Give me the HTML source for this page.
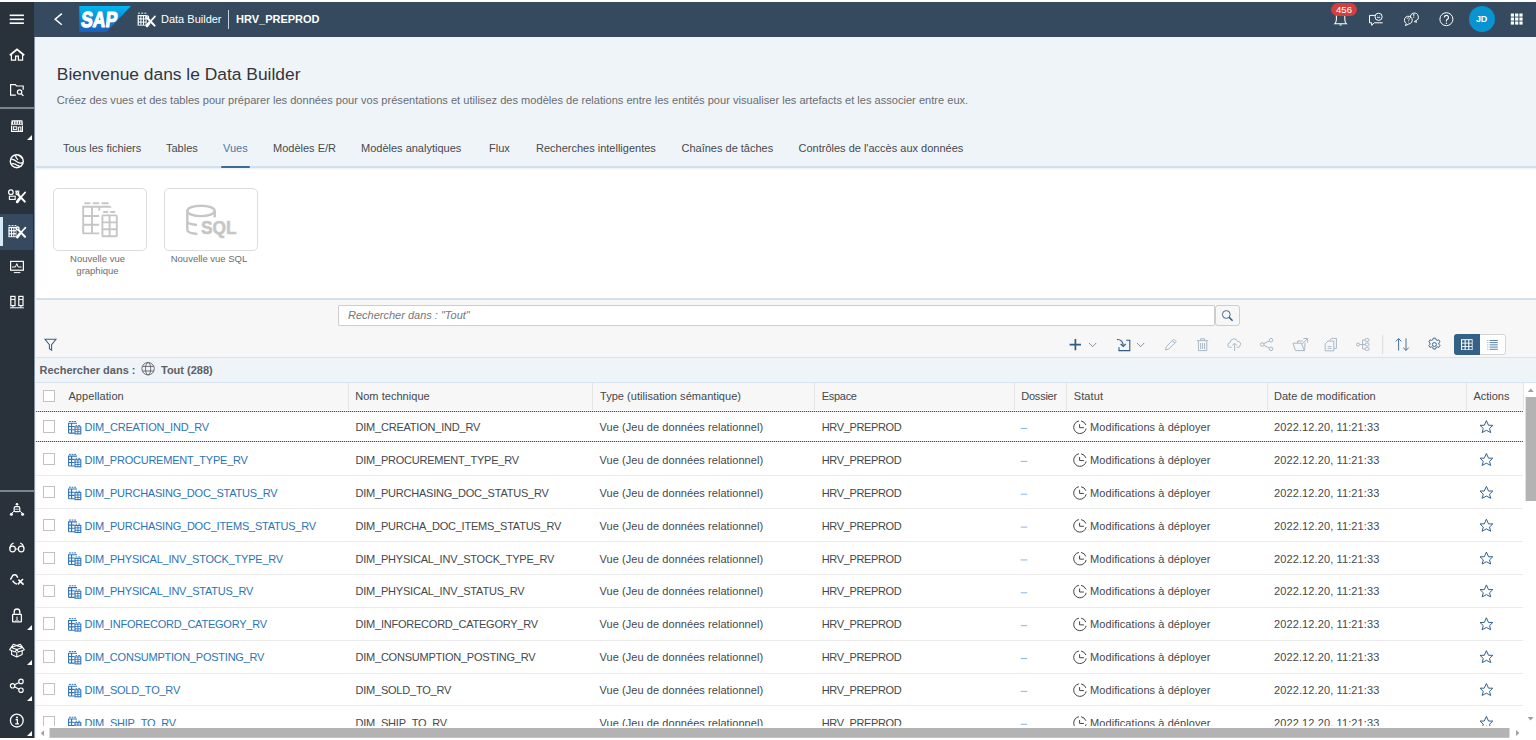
<!DOCTYPE html>
<html><head><meta charset="utf-8"><style>
*{box-sizing:border-box;margin:0;padding:0}
html,body{width:1536px;height:740px;overflow:hidden;background:#fff;font-family:"Liberation Sans",sans-serif;color:#32363a}
.a{position:absolute}
svg{position:absolute;overflow:visible}
.t{position:absolute;white-space:nowrap;line-height:1}
</style></head><body>
<div class="a" style="left:0px;top:0px;width:1536px;height:2px;background:#fdfdfd"></div>
<div class="a" style="left:0px;top:2px;width:1536px;height:35px;background:#354a5f"></div>
<div class="a" style="left:0px;top:2px;width:34px;height:736px;background:#29313a"></div>
<div class="a" style="left:33px;top:37px;width:1px;height:701px;background:#242a31"></div>
<svg style="left:0px;top:0px" width="34" height="37" viewBox="0 0 34 37"><rect x="9.7" y="14.5" width="14.2" height="1.6" fill="#ffffff"/><rect x="9.7" y="18.5" width="14.2" height="1.6" fill="#ffffff"/><rect x="9.7" y="22.4" width="14.2" height="1.6" fill="#ffffff"/></svg>
<svg style="left:40px;top:0px" width="30" height="37" viewBox="0 0 30 37"><polyline points="21.8,13.6 15.2,19.2 21.8,24.8" fill="none" stroke="#fff" stroke-width="1.5"/></svg>
<svg style="left:0px;top:0px" width="140" height="37" viewBox="0 0 140 37"><defs><linearGradient id="sapg" x1="0" y1="0" x2="0" y2="1"><stop offset="0" stop-color="#00b8f1"/><stop offset="0.5" stop-color="#0a8ad8"/><stop offset="1" stop-color="#1e5dbd"/></linearGradient></defs><polygon points="79.3,6.1 131,6.1 106.4,31.9 79.3,31.9" fill="url(#sapg)"/><text x="80.6" y="26.8" font-family="Liberation Sans" font-weight="bold" font-size="21.8" fill="#fff" stroke="#fff" stroke-width="1.2" stroke-linejoin="round" textLength="36" lengthAdjust="spacingAndGlyphs" transform="translate(80.6 26.8) skewX(-6) translate(-80.6 -26.8)">SAP</text></svg>
<svg style="left:0px;top:0px" width="200" height="37" viewBox="0 0 200 37"><g transform="translate(137.6,12.6)"><path d="M0.4 0.6h2M3.6 0.6h2M6.8 0.6h2" stroke="#fff" stroke-width="0.9"/><rect x="0" y="2.4" width="9" height="10.6" fill="#fff"/><rect x="1.2" y="3.6" width="1.6" height="2.2" fill="#354a5f"/><rect x="3.8" y="3.6" width="1.6" height="2.2" fill="#354a5f"/><rect x="6.4" y="3.6" width="1.6" height="2.2" fill="#354a5f"/><rect x="1.2" y="6.8" width="1.6" height="2.2" fill="#354a5f"/><rect x="3.8" y="6.8" width="1.6" height="2.2" fill="#354a5f"/><rect x="6.4" y="6.8" width="1.6" height="2.2" fill="#354a5f"/><rect x="1.2" y="10.0" width="1.6" height="2.2" fill="#354a5f"/><rect x="3.8" y="10.0" width="1.6" height="2.2" fill="#354a5f"/><rect x="6.4" y="10.0" width="1.6" height="2.2" fill="#354a5f"/><g transform="translate(8.2,2.4)" fill="none" stroke="#fff" stroke-linecap="round"><path d="M1.8 3.2L8.8 10.6" stroke-width="2.1"/><circle cx="1.4" cy="2.2" r="1.4" stroke-width="1.3"/><path d="M9.2 1.4L3.6 7.6" stroke-width="1.6"/><path d="M3.4 7.8L1.2 10.8" stroke-width="2.8"/></g></g></svg>
<div class="t" style="left:161px;top:13.99px;font-size:11px;color:#fff">Data Builder</div>
<div class="a" style="left:228px;top:10px;width:1px;height:19px;background:#c9d1d9"></div>
<div class="t" style="left:236px;top:13.99px;font-size:11px;color:#fff;font-weight:bold">HRV_PREPROD</div>
<svg style="left:1320px;top:0px" width="40" height="37" viewBox="0 0 40 37"><path d="M16.4 15v4.6c0 1.8-0.4 3-1.6 4.2h11.6c-1.2-1.2-1.6-2.4-1.6-4.2V15" fill="none" stroke="#fff" stroke-width="1.05"/><path d="M19.2 24.4c0.3 0.9 0.7 1.2 1.4 1.2s1.1-0.3 1.4-1.2z" fill="#fff"/></svg>
<div class="a" style="left:1331px;top:3px;width:26px;height:13px;background:#d33f3f;border-radius:7px"></div>
<div class="t" style="left:1331px;top:4.77px;font-size:9.6px;width:26px;text-align:center;color:#fff">456</div>
<svg style="left:1360px;top:0px" width="30" height="37" viewBox="0 0 30 37"><path d="M14.9 15.4H9.5v7.4h2.2v2.6l2.6-2.6h8.4" fill="none" stroke="#fff" stroke-width="1"/><circle cx="18.6" cy="16.8" r="3.6" fill="none" stroke="#fff" stroke-width="1"/><path d="M17 17.6h3.2M17.4 16h0.6M19.2 16h0.6" stroke="#fff" stroke-width="0.8"/></svg>
<svg style="left:1400px;top:0px" width="24" height="37" viewBox="0 0 24 37"><path d="M6.2 23.4a3.9 3.9 0 1 1 2.6 0.6l-3.4 1.6z" fill="none" stroke="#fff" stroke-width="1"/><path d="M10.6 17.8a3.9 3.9 0 1 1 4.8 3l1.4 1.4-2.8-0.6" fill="none" stroke="#fff" stroke-width="1"/><path d="M7.2 18.9a1.1 1.1 0 1 1 1.5 1v0.9" fill="none" stroke="#fff" stroke-width="0.8"/><circle cx="8.7" cy="22" r="0.45" fill="#fff"/><path d="M13.8 13.8v2.6" stroke="#fff" stroke-width="1"/><circle cx="13.8" cy="17.6" r="0.5" fill="#fff"/></svg>
<svg style="left:1430px;top:0px" width="30" height="37" viewBox="0 0 30 37"><circle cx="16.4" cy="19.2" r="6.5" fill="none" stroke="#fff" stroke-width="1"/><path d="M14.3 17.4a2.1 2.1 0 1 1 2.9 2c-0.6 0.3-0.8 0.7-0.8 1.4v0.6" fill="none" stroke="#fff" stroke-width="1.1"/><circle cx="16.4" cy="23.3" r="0.7" fill="#fff"/></svg>
<div class="a" style="left:1468.5px;top:6px;width:26px;height:26px;background:#0893d1;border-radius:50%"></div>
<div class="t" style="left:1468.5px;top:14.78px;font-size:9px;width:26px;text-align:center;color:#fff;font-weight:bold;letter-spacing:-0.2px">JD</div>
<svg style="left:0px;top:0px" width="1536" height="37" viewBox="0 0 1536 37"><rect x="1510.8" y="13.5" width="3.2" height="3.1" fill="#fff"/><rect x="1515.1" y="13.5" width="3.2" height="3.1" fill="#fff"/><rect x="1519.4" y="13.5" width="3.2" height="3.1" fill="#fff"/><rect x="1510.8" y="17.5" width="3.2" height="3.1" fill="#fff"/><rect x="1515.1" y="17.5" width="3.2" height="3.1" fill="#fff"/><rect x="1519.4" y="17.5" width="3.2" height="3.1" fill="#fff"/><rect x="1510.8" y="21.5" width="3.2" height="3.1" fill="#fff"/><rect x="1515.1" y="21.5" width="3.2" height="3.1" fill="#fff"/><rect x="1519.4" y="21.5" width="3.2" height="3.1" fill="#fff"/></svg>
<div class="a" style="left:0px;top:107px;width:34px;height:2px;background:#7c838a"></div>
<div class="a" style="left:0px;top:490px;width:34px;height:2px;background:#7c838a"></div>
<div class="a" style="left:0px;top:214px;width:33px;height:36px;background:#354a5f"></div>
<div class="a" style="left:0px;top:217px;width:3px;height:29px;background:#d8e9f8"></div>
<svg style="left:0px;top:0px" width="34" height="740" viewBox="0 0 34 740"><path d="M9.8 55.2l7.2-5.8 7.2 5.8" fill="none" stroke="#ffffff" stroke-width="1.8"/><path d="M11.4 54.6v5.6h4.2v-4h2.8v4h4.2v-5.6" fill="none" stroke="#ffffff" stroke-width="1.2"/><path d="M15.8 95.2H10.6V84.6h4.6l1.4 1.4h6.6v3.8" fill="none" stroke="#ffffff" stroke-width="1.2"/><circle cx="19.6" cy="92" r="2.2" fill="none" stroke="#ffffff" stroke-width="1.2"/><path d="M21.2 93.7l2.2 2.2" stroke="#ffffff" stroke-width="1.3"/><path d="M11.6 120.2h10.8l0.6 4.6H11z" fill="#ffffff"/><path d="M13.6 121.4v2.6M16 121.4v2.6M18.4 121.4v2.6M20.8 121.4v2.6" stroke="#29313a" stroke-width="0.9"/><path d="M11.6 125.6v5.8h10.8v-5.8" fill="none" stroke="#ffffff" stroke-width="1.2"/><rect x="13.4" y="126.8" width="3.4" height="2.6" fill="none" stroke="#ffffff" stroke-width="1"/><path d="M18.6 131.2v-4.2h2.2v4.2" fill="none" stroke="#ffffff" stroke-width="1"/><circle cx="16.8" cy="161.2" r="6.5" fill="none" stroke="#ffffff" stroke-width="1.4"/><path d="M11.2 159.2c2.4 0.2 4.4 1.4 6.2 2.8 1.8 1.2 3.8 1.4 5.6 0.6M11.8 163.8c2.2-0.6 4 0.4 5.6 1.6 1.4 1 2.8 1.2 4 0.6M15.4 155.4c0.4 2 1.2 3.4 2.6 4.4M18.4 155.2c1.8 0.8 3 2 3.6 3.4" fill="none" stroke="#ffffff" stroke-width="1.3"/><circle cx="10.9" cy="192.2" r="2.3" fill="none" stroke="#ffffff" stroke-width="1.2"/><rect x="9.4" y="196.2" width="5.8" height="3.2" fill="none" stroke="#ffffff" stroke-width="1.1"/><path d="M15.2 191.2h4.2" stroke="#ffffff" stroke-width="1.2"/><g transform="translate(16,191)" fill="none" stroke="#fff" stroke-linecap="round"><path d="M1.8 3.2L8.8 10.6" stroke-width="2.1"/><circle cx="1.4" cy="2.2" r="1.4" stroke-width="1.3"/><path d="M9.2 1.4L3.6 7.6" stroke-width="1.6"/><path d="M3.4 7.8L1.2 10.8" stroke-width="2.8"/></g><path d="M8.6 225.5h1.8M11.6 225.5h1.8M14.6 225.5h1.8" stroke="#ffffff" stroke-width="0.9"/><rect x="8.4" y="226.8" width="8" height="10.4" fill="#ffffff"/><rect x="9.6" y="228.2" width="1.4" height="1.9" fill="#354a5f"/><rect x="12.0" y="228.2" width="1.4" height="1.9" fill="#354a5f"/><rect x="14.4" y="228.2" width="1.4" height="1.9" fill="#354a5f"/><rect x="9.6" y="231.3" width="1.4" height="1.9" fill="#354a5f"/><rect x="12.0" y="231.3" width="1.4" height="1.9" fill="#354a5f"/><rect x="14.4" y="231.3" width="1.4" height="1.9" fill="#354a5f"/><rect x="9.6" y="234.4" width="1.4" height="1.9" fill="#354a5f"/><rect x="12.0" y="234.4" width="1.4" height="1.9" fill="#354a5f"/><rect x="14.4" y="234.4" width="1.4" height="1.9" fill="#354a5f"/><g transform="translate(16.2,226.2)" fill="none" stroke="#fff" stroke-linecap="round"><path d="M1.8 3.2L8.8 10.6" stroke-width="2.1"/><circle cx="1.4" cy="2.2" r="1.4" stroke-width="1.3"/><path d="M9.2 1.4L3.6 7.6" stroke-width="1.6"/><path d="M3.4 7.8L1.2 10.8" stroke-width="2.8"/></g><rect x="10.6" y="261.4" width="12.8" height="8.8" fill="none" stroke="#ffffff" stroke-width="1.2"/><path d="M12 267h3.4l1.4-3.4 1.4 3.4h3.4M13.8 272.6h6.6" fill="none" stroke="#ffffff" stroke-width="1"/><rect x="10.8" y="296.4" width="4.2" height="9.2" fill="none" stroke="#ffffff" stroke-width="1.2"/><rect x="18.8" y="296.4" width="4.2" height="9.2" fill="none" stroke="#ffffff" stroke-width="1.2"/><path d="M10.8 299.4h4.2M18.8 299.4h4.2M12.9 305.6v2.2M20.9 305.6v2.2M10 307.8h13.8" fill="none" stroke="#ffffff" stroke-width="1"/><g transform="translate(0,0.7)"><circle cx="17" cy="503.6" r="1.3" fill="#ffffff"/><rect x="14.2" y="506" width="5.6" height="5" rx="1.2" fill="none" stroke="#ffffff" stroke-width="1.2"/><path d="M15.2 508.5h3.6" stroke="#ffffff" stroke-width="0.8"/><path d="M14.2 510.4l-2.6 2.2M19.8 510.4l2.6 2.2" stroke="#ffffff" stroke-width="1"/><circle cx="11.4" cy="513.6" r="1.5" fill="#ffffff"/><circle cx="22.6" cy="513.6" r="1.5" fill="#ffffff"/></g><circle cx="12.6" cy="549" r="2.8" fill="none" stroke="#ffffff" stroke-width="1.2"/><circle cx="21.2" cy="549" r="2.8" fill="none" stroke="#ffffff" stroke-width="1.2"/><path d="M9.8 548.4c0.6-3 2-4.8 3.8-5.2M24 548.4c-0.6-3-2-4.8-3.8-5.2M15.4 549h3" fill="none" stroke="#ffffff" stroke-width="1.2"/><path d="M10.4 579.6L12.8 575.4C13.8 574.4 15.6 574.4 16.6 575.6L17.8 577.6M12.6 580.6C13.6 582.6 15 583.6 16.8 584.2" fill="none" stroke="#ffffff" stroke-width="1.5"/><path d="M17.8 584.4L23 579M18.4 579.6L23.6 584.6" fill="none" stroke="#ffffff" stroke-width="1.6"/><rect x="12.6" y="614.4" width="8.8" height="7.4" rx="0.6" fill="none" stroke="#ffffff" stroke-width="1.3"/><path d="M14.2 614.4v-2.6a2.8 2.8 0 0 1 5.6 0v2.6" fill="none" stroke="#ffffff" stroke-width="1.3"/><path d="M17 616.6v2.6M15.2 621.4l1.8-2 1.8 2" fill="none" stroke="#ffffff" stroke-width="1"/><path d="M11.2 647.4L16.8 645.6L22.6 647.4L16.8 649.4Z M11.2 647.4L9.6 649.8L15.2 652L16.8 649.4L18.4 652L24.4 649.8L22.6 647.4 M11.2 647.4L13.4 644.2L16.8 645.6L20.2 644.2L22.6 647.4 M11.6 650.6V654.6L16.8 657L22.2 654.6V650.6 M16.8 652V657" fill="none" stroke="#ffffff" stroke-width="1.1" stroke-linejoin="round"/><circle cx="12.6" cy="685.8" r="2.2" fill="none" stroke="#ffffff" stroke-width="1.2"/><circle cx="21" cy="681.4" r="2.2" fill="none" stroke="#ffffff" stroke-width="1.2"/><circle cx="21" cy="690.2" r="2.2" fill="none" stroke="#ffffff" stroke-width="1.2"/><path d="M14.6 684.8l4.4-2.4M14.6 686.8l4.4 2.4" stroke="#ffffff" stroke-width="1.1"/><circle cx="16.8" cy="720.6" r="6.4" fill="none" stroke="#ffffff" stroke-width="1.3"/><circle cx="17" cy="717.6" r="1" fill="#ffffff"/><path d="M15.6 719.6h1.8v4.2M15.2 723.8h3.8" fill="none" stroke="#ffffff" stroke-width="1.3"/></svg>
<svg style="left:27.3px;top:135px" width="5" height="5" viewBox="0 0 5 5"><polygon points="5,0 5,5 0,5" fill="#fff"/></svg>
<svg style="left:27.3px;top:624.5px" width="5" height="5" viewBox="0 0 5 5"><polygon points="5,0 5,5 0,5" fill="#fff"/></svg>
<svg style="left:27.3px;top:660px" width="5" height="5" viewBox="0 0 5 5"><polygon points="5,0 5,5 0,5" fill="#fff"/></svg>
<svg style="left:27.3px;top:695.5px" width="5" height="5" viewBox="0 0 5 5"><polygon points="5,0 5,5 0,5" fill="#fff"/></svg>
<svg style="left:27.3px;top:730.5px" width="5" height="5" viewBox="0 0 5 5"><polygon points="5,0 5,5 0,5" fill="#fff"/></svg>
<div class="a" style="left:35px;top:37px;width:1501px;height:130px;background:#eff4f9"></div>
<div class="a" style="left:35px;top:166px;width:1501px;height:2px;background:#d2dfec"></div>
<div class="a" style="left:35px;top:168px;width:1501px;height:2px;background:linear-gradient(#e9f0f6,#fbfcfd)"></div>
<div class="t" style="left:56.8px;top:65.57px;font-size:17.4px;color:#32363a">Bienvenue dans le Data Builder</div>
<div class="t" style="left:56.8px;top:94.92px;font-size:11.08px;color:#6a6d70">Créez des vues et des tables pour préparer les données pour vos présentations et utilisez des modèles de relations entre les entités pour visualiser les artefacts et les associer entre eux.</div>
<div class="t" style="left:63px;top:143.09px;font-size:11px;color:#46494d">Tous les fichiers</div>
<div class="t" style="left:166px;top:143.09px;font-size:11px;color:#46494d">Tables</div>
<div class="t" style="left:223px;top:143.09px;font-size:11px;color:#4a78a3">Vues</div>
<div class="t" style="left:273px;top:143.09px;font-size:11px;color:#46494d">Modèles E/R</div>
<div class="t" style="left:361px;top:143.09px;font-size:11px;color:#46494d">Modèles analytiques</div>
<div class="t" style="left:489px;top:143.09px;font-size:11px;color:#46494d">Flux</div>
<div class="t" style="left:536px;top:143.09px;font-size:11px;color:#46494d">Recherches intelligentes</div>
<div class="t" style="left:681.5px;top:143.09px;font-size:11px;color:#46494d">Chaînes de tâches</div>
<div class="t" style="left:798.5px;top:143.09px;font-size:11px;color:#46494d">Contrôles de l'accès aux données</div>
<div class="a" style="left:221px;top:166px;width:29px;height:2px;background:#3d6a95;border-radius:1px"></div>
<div class="a" style="left:35px;top:170px;width:1501px;height:129px;background:#fff"></div>
<div class="a" style="left:35px;top:298px;width:1501px;height:2px;background:#d4e0ec"></div>
<div class="a" style="left:53px;top:188px;width:94px;height:63px;border:1px solid #dcdcdc;border-radius:5px;background:#fff"></div>
<div class="a" style="left:164px;top:188px;width:94px;height:63px;border:1px solid #dcdcdc;border-radius:5px;background:#fff"></div>
<svg style="left:0px;top:0px" width="300" height="260" viewBox="0 0 300 260"><g fill="none" stroke="#c6c6c6" stroke-width="1.9"><path d="M84.4 203.2h6M92.8 203.2h6.4M101.6 203.2h7"/><path d="M83.2 234V206.8h26.2c0.6 0 1 0.4 1 1M83.2 216h16M83.2 224.8h16M83.2 233.4h16M92 206.8v26.6"/><path d="M99.2 207v3.6"/><path d="M103.2 212h5M110.2 212h5"/><rect x="102.4" y="215.4" width="14.4" height="20.8" rx="0.6"/><path d="M102.4 222.4h14.4M102.4 229.2h14.4M109.6 215.4v20.8"/></g></svg>
<svg style="left:0px;top:0px" width="300" height="260" viewBox="0 0 300 260"><g fill="none" stroke="#c6c6c6" stroke-width="2.4"><ellipse cx="201" cy="210.9" rx="13.7" ry="5.2"/><path d="M187.3 211v18.6c0 2.6 3.6 4 10 4.4"/><path d="M187.3 221.6c0 1.8 4 3 9.6 3.4"/><path d="M214.7 211v6.4"/></g><text x="201" y="233.8" font-family="Liberation Sans" font-weight="bold" font-size="19" fill="#c6c6c6" stroke="#c6c6c6" stroke-width="0.5" textLength="35.6" lengthAdjust="spacingAndGlyphs">SQL</text></svg>
<div class="t" style="left:53px;top:254.06px;font-size:9.5px;width:89px;text-align:center;color:#6a6d70">Nouvelle vue</div>
<div class="t" style="left:53px;top:265.56px;font-size:9.5px;width:89px;text-align:center;color:#6a6d70">graphique</div>
<div class="t" style="left:164px;top:254.06px;font-size:9.5px;width:90px;text-align:center;color:#6a6d70">Nouvelle vue SQL</div>
<div class="a" style="left:35px;top:300px;width:1501px;height:57px;background:#f7f7f7"></div>
<div class="a" style="left:35px;top:356.5px;width:1501px;height:1.5px;background:#e0e0e0"></div>
<div class="a" style="left:338px;top:305.4px;width:876.5px;height:20.6px;background:#fff;border:1.2px solid #cdcdcd;border-radius:1px"></div>
<div class="t" style="left:348px;top:310.29px;font-size:11px;color:#74777a;font-style:italic">Rechercher dans : "Tout"</div>
<div class="a" style="left:1215px;top:305.4px;width:25px;height:20.6px;background:#f7f7f7;border:1.3px solid #cdcdcd;border-radius:3px"></div>
<svg style="left:1214px;top:305px" width="26" height="21" viewBox="0 0 26 21"><circle cx="12.3" cy="9.5" r="3.9" fill="none" stroke="#3d6893" stroke-width="1"/><path d="M15.2 12.4l3.4 3.4" stroke="#2f5d8a" stroke-width="1.5"/></svg>
<svg style="left:35px;top:330px" width="30" height="28" viewBox="0 0 30 28"><path d="M10 9.2h11l-4.4 5.6v5.4l-2.2-1.4v-4z" fill="none" stroke="#346187" stroke-width="1.05"/></svg>
<svg style="left:0px;top:0px" width="1536" height="360" viewBox="0 0 1536 360"><path d="M1069.6 344.7h11.4M1075.4 339v11.3" stroke="#315b87" stroke-width="1.7"/><polyline points="1089,343 1092.6,346.6 1096.2,343" fill="none" stroke="#7a7f95" stroke-width="0.9"/><polyline points="1137,343 1140.6,346.6 1144.2,343" fill="none" stroke="#7a7f95" stroke-width="0.9"/><path d="M1119 347.2V350.6H1129.8V340.2H1126.2" fill="none" stroke="#315b87" stroke-width="1.1"/><path d="M1117 339.5C1120.6 339.4 1123 341.2 1123.2 345.8" fill="none" stroke="#315b87" stroke-width="1.1"/><polyline points="1120.6,344 1123.2,346.5 1125.8,344" fill="none" stroke="#315b87" stroke-width="1.2"/><path d="M1165.4 350l1-3.4 7.4-7.4 2.4 2.4-7.4 7.4zM1172.4 340.6l2.4 2.4" fill="none" stroke="#a9b8c6" stroke-width="1"/><path d="M1197 340.6h11.2M1200.6 340.6v-1.8h4v1.8M1198.4 341v9.6h8.4v-9.6M1200.6 343v6M1202.6 343v6M1204.6 343v6" fill="none" stroke="#a9b8c6" stroke-width="1"/><path d="M1231.6 347.4h-1.4a2.4 2.4 0 0 1 0-4.8 3.8 3.8 0 0 1 7.4-1.2 2.6 2.6 0 0 1 2.4 4.2 2 2 0 0 1-1.6 1.8h-1.6M1234.6 351v-7.6M1232.2 345.6l2.4-2.4 2.4 2.4" fill="none" stroke="#a9b8c6" stroke-width="1"/><circle cx="1262.2" cy="344.5" r="1.8" fill="none" stroke="#a9b8c6" stroke-width="1"/><circle cx="1271" cy="340.2" r="1.8" fill="none" stroke="#a9b8c6" stroke-width="1"/><circle cx="1271" cy="348.8" r="1.8" fill="none" stroke="#a9b8c6" stroke-width="1"/><path d="M1263.8 343.6l5.6-2.6M1263.8 345.4l5.6 2.6" stroke="#a9b8c6" stroke-width="1"/><path d="M1293 343.2H1301.4L1304.4 350.6H1295.4Z" fill="none" stroke="#a9b8c6" stroke-width="1" stroke-linejoin="round"/><path d="M1297.6 343V341H1302.6M1305.1 342.6L1304.6 350.4" fill="none" stroke="#a9b8c6" stroke-width="1"/><path d="M1302.2 344L1307.4 338.7M1303.4 338.5H1307.6V342.6" fill="none" stroke="#a9b8c6" stroke-width="1"/><path d="M1325.2 343.8L1328 341H1333.8V350.8H1325.2Z" fill="none" stroke="#a9b8c6" stroke-width="1" stroke-linejoin="round"/><path d="M1329.4 340.8L1331.4 338.4H1336.4V348.4H1334" fill="none" stroke="#a9b8c6" stroke-width="1"/><path d="M1327.6 346.6H1331.6M1327.6 348.4H1331.6" stroke="#a9b8c6" stroke-width="0.9"/><circle cx="1358" cy="344.5" r="1.5" fill="none" stroke="#a9b8c6" stroke-width="1"/><rect x="1365.2" y="338.6" width="3.8" height="2.8" rx="1" fill="none" stroke="#a9b8c6" stroke-width="1"/><rect x="1365.2" y="343.1" width="3.8" height="2.8" rx="1" fill="none" stroke="#a9b8c6" stroke-width="1"/><rect x="1365.2" y="347.6" width="3.8" height="2.8" rx="1" fill="none" stroke="#a9b8c6" stroke-width="1"/><path d="M1359.6 344.5h5.6M1362.6 340v9M1362.6 340h2.6M1362.6 349h2.6" fill="none" stroke="#a9b8c6" stroke-width="1"/><rect x="1382.2" y="335.2" width="1" height="19" fill="#d9d9d9"/><path d="M1398.6 350.6v-12M1395.8 341.4l2.8-2.8 2.8 2.8M1406 338.4v12M1403.2 347.6l2.8 2.8 2.8-2.8" fill="none" stroke="#45709b" stroke-width="1"/><circle cx="1434.4" cy="344.5" r="2" fill="none" stroke="#3d6893" stroke-width="1"/><path d="M1433.2 338.2h2.4l0.4 1.6 1.2 0.6 1.6-0.6 1.2 2-1.2 1.2v1.2l1.2 1.2-1.2 2-1.6-0.6-1.2 0.6-0.4 1.6h-2.4l-0.4-1.6-1.2-0.6-1.6 0.6-1.2-2 1.2-1.2v-1.2l-1.2-1.2 1.2-2 1.6 0.6 1.2-0.6z" fill="none" stroke="#3d6893" stroke-width="1"/></svg>
<div class="a" style="left:1453.5px;top:334.2px;width:52px;height:20.6px;border:1px solid #d5d5d5;border-radius:3px;background:#fff"></div>
<div class="a" style="left:1453.5px;top:334.2px;width:26.5px;height:20.6px;background:#346187;border-radius:3px 0 0 3px"></div>
<svg style="left:0px;top:0px" width="1536" height="360" viewBox="0 0 1536 360"><rect x="1461" y="339.2" width="11.6" height="10.8" fill="#fff"/><rect x="1462.10" y="340.20" width="2.5" height="2.5" fill="#346187"/><rect x="1465.70" y="340.20" width="2.5" height="2.5" fill="#346187"/><rect x="1469.30" y="340.20" width="2.5" height="2.5" fill="#346187"/><rect x="1462.10" y="343.55" width="2.5" height="2.5" fill="#346187"/><rect x="1465.70" y="343.55" width="2.5" height="2.5" fill="#346187"/><rect x="1469.30" y="343.55" width="2.5" height="2.5" fill="#346187"/><rect x="1462.10" y="346.90" width="2.5" height="2.5" fill="#346187"/><rect x="1465.70" y="346.90" width="2.5" height="2.5" fill="#346187"/><rect x="1469.30" y="346.90" width="2.5" height="2.5" fill="#346187"/></svg>
<svg style="left:0px;top:0px" width="1536" height="360" viewBox="0 0 1536 360"><rect x="1487.4" y="340.0" width="0.9" height="0.9" fill="#6a8aa6"/><rect x="1489.6" y="340.0" width="8.2" height="0.9" fill="#4f7394"/><rect x="1487.4" y="342.2" width="0.9" height="0.9" fill="#6a8aa6"/><rect x="1489.6" y="342.2" width="8.2" height="0.9" fill="#4f7394"/><rect x="1487.4" y="344.4" width="0.9" height="0.9" fill="#6a8aa6"/><rect x="1489.6" y="344.4" width="8.2" height="0.9" fill="#4f7394"/><rect x="1487.4" y="346.6" width="0.9" height="0.9" fill="#6a8aa6"/><rect x="1489.6" y="346.6" width="8.2" height="0.9" fill="#4f7394"/><rect x="1487.4" y="348.8" width="0.9" height="0.9" fill="#6a8aa6"/><rect x="1489.6" y="348.8" width="8.2" height="0.9" fill="#4f7394"/></svg>
<div class="a" style="left:35px;top:358px;width:1501px;height:24.5px;background:#eff4f9"></div>
<div class="a" style="left:35px;top:382px;width:1501px;height:1px;background:#d9e3ed"></div>
<div class="t" style="left:39.5px;top:365.09px;font-size:11px;color:#5d6165;font-weight:bold">Rechercher dans :</div>
<svg style="left:0px;top:0px" width="300" height="400" viewBox="0 0 300 400"><g fill="none" stroke="#5d6165" stroke-width="0.9"><circle cx="148.1" cy="368.7" r="6.2"/><ellipse cx="148.1" cy="368.7" rx="2.6" ry="6.2"/><path d="M142.4 366.4h11.4M142.4 371h11.4"/></g></svg>
<div class="t" style="left:161px;top:365.09px;font-size:11px;color:#5d6165;font-weight:bold">Tout (288)</div>
<div class="a" style="left:35px;top:383px;width:1488px;height:27px;background:#f7f7f7"></div>
<div class="a" style="left:348px;top:383px;width:1px;height:27px;background:#e5e5e5"></div>
<div class="a" style="left:592px;top:383px;width:1px;height:27px;background:#e5e5e5"></div>
<div class="a" style="left:814px;top:383px;width:1px;height:27px;background:#e5e5e5"></div>
<div class="a" style="left:1014px;top:383px;width:1px;height:27px;background:#e5e5e5"></div>
<div class="a" style="left:1066px;top:383px;width:1px;height:27px;background:#e5e5e5"></div>
<div class="a" style="left:1267px;top:383px;width:1px;height:27px;background:#e5e5e5"></div>
<div class="a" style="left:1466px;top:383px;width:1px;height:27px;background:#e5e5e5"></div>
<div class="a" style="left:42.6px;top:389.8px;width:12.4px;height:12.4px;border:1.7px solid #c2c2c2;background:#fff"></div>
<div class="t" style="left:68.4px;top:390.69px;font-size:11px;color:#44484c;letter-spacing:0.090px">Appellation</div>
<div class="t" style="left:355.2px;top:390.69px;font-size:11px;color:#44484c;letter-spacing:0.041px">Nom technique</div>
<div class="t" style="left:600px;top:390.69px;font-size:11px;color:#44484c;letter-spacing:0.035px">Type (utilisation sémantique)</div>
<div class="t" style="left:821.7px;top:390.69px;font-size:11px;color:#44484c;letter-spacing:-0.278px">Espace</div>
<div class="t" style="left:1021.3px;top:390.69px;font-size:11px;color:#44484c;letter-spacing:-0.242px">Dossier</div>
<div class="t" style="left:1073.8px;top:390.69px;font-size:11px;color:#44484c;letter-spacing:0.087px">Statut</div>
<div class="t" style="left:1273.9px;top:390.69px;font-size:11px;color:#44484c;letter-spacing:0.082px">Date de modification</div>
<div class="t" style="left:1473.5px;top:390.69px;font-size:11px;color:#44484c;letter-spacing:-0.023px">Actions</div>
<div class="a" style="left:0;top:410px;width:1523px;height:316px;overflow:hidden">
<div class="a" style="left:35px;top:0;width:1488px;height:316px;background:#fff"></div>
<div class="a" style="left:42.6px;top:10.199999999999989px;width:12.4px;height:12.4px;border:1.7px solid #c2c2c2;background:#fff"></div>
<div class="t" style="left:84.5px;top:12.09px;font-size:11px;color:#2d73b8;letter-spacing:-0.215px">DIM_CREATION_IND_RV</div>
<div class="t" style="left:355.5px;top:12.09px;font-size:11px;color:#44484c;letter-spacing:-0.209px">DIM_CREATION_IND_RV</div>
<div class="t" style="left:599.6px;top:12.09px;font-size:11px;color:#44484c;letter-spacing:0.060px">Vue (Jeu de données relationnel)</div>
<div class="t" style="left:821.7px;top:12.09px;font-size:11px;color:#44484c;letter-spacing:-0.345px">HRV_PREPROD</div>
<div class="t" style="left:1090px;top:12.09px;font-size:11px;color:#44484c;letter-spacing:0.076px">Modifications à déployer</div>
<div class="t" style="left:1274px;top:12.09px;font-size:11px;color:#44484c;letter-spacing:0.113px">2022.12.20, 11:21:33</div>
<div class="a" style="left:35px;top:65px;width:1488px;height:1px;background:#ebebeb"></div>
<div class="a" style="left:42.6px;top:43.10000000000002px;width:12.4px;height:12.4px;border:1.7px solid #c2c2c2;background:#fff"></div>
<div class="t" style="left:84.5px;top:44.95px;font-size:11px;color:#2d73b8;letter-spacing:-0.233px">DIM_PROCUREMENT_TYPE_RV</div>
<div class="t" style="left:355.5px;top:44.95px;font-size:11px;color:#44484c;letter-spacing:-0.226px">DIM_PROCUREMENT_TYPE_RV</div>
<div class="t" style="left:599.6px;top:44.95px;font-size:11px;color:#44484c;letter-spacing:0.060px">Vue (Jeu de données relationnel)</div>
<div class="t" style="left:821.7px;top:44.95px;font-size:11px;color:#44484c;letter-spacing:-0.345px">HRV_PREPROD</div>
<div class="t" style="left:1090px;top:44.95px;font-size:11px;color:#44484c;letter-spacing:0.076px">Modifications à déployer</div>
<div class="t" style="left:1274px;top:44.95px;font-size:11px;color:#44484c;letter-spacing:0.113px">2022.12.20, 11:21:33</div>
<div class="a" style="left:35px;top:98px;width:1488px;height:1px;background:#ebebeb"></div>
<div class="a" style="left:42.6px;top:75.89999999999998px;width:12.4px;height:12.4px;border:1.7px solid #c2c2c2;background:#fff"></div>
<div class="t" style="left:84.5px;top:77.81px;font-size:11px;color:#2d73b8;letter-spacing:-0.226px">DIM_PURCHASING_DOC_STATUS_RV</div>
<div class="t" style="left:355.5px;top:77.81px;font-size:11px;color:#44484c;letter-spacing:-0.220px">DIM_PURCHASING_DOC_STATUS_RV</div>
<div class="t" style="left:599.6px;top:77.81px;font-size:11px;color:#44484c;letter-spacing:0.060px">Vue (Jeu de données relationnel)</div>
<div class="t" style="left:821.7px;top:77.81px;font-size:11px;color:#44484c;letter-spacing:-0.345px">HRV_PREPROD</div>
<div class="t" style="left:1090px;top:77.81px;font-size:11px;color:#44484c;letter-spacing:0.076px">Modifications à déployer</div>
<div class="t" style="left:1274px;top:77.81px;font-size:11px;color:#44484c;letter-spacing:0.113px">2022.12.20, 11:21:33</div>
<div class="a" style="left:35px;top:131px;width:1488px;height:1px;background:#ebebeb"></div>
<div class="a" style="left:42.6px;top:108.79999999999995px;width:12.4px;height:12.4px;border:1.7px solid #c2c2c2;background:#fff"></div>
<div class="t" style="left:84.5px;top:110.67px;font-size:11px;color:#2d73b8;letter-spacing:-0.224px">DIM_PURCHASING_DOC_ITEMS_STATUS_RV</div>
<div class="t" style="left:355.5px;top:110.67px;font-size:11px;color:#44484c;letter-spacing:-0.219px">DIM_PURCHA_DOC_ITEMS_STATUS_RV</div>
<div class="t" style="left:599.6px;top:110.67px;font-size:11px;color:#44484c;letter-spacing:0.060px">Vue (Jeu de données relationnel)</div>
<div class="t" style="left:821.7px;top:110.67px;font-size:11px;color:#44484c;letter-spacing:-0.345px">HRV_PREPROD</div>
<div class="t" style="left:1090px;top:110.67px;font-size:11px;color:#44484c;letter-spacing:0.076px">Modifications à déployer</div>
<div class="t" style="left:1274px;top:110.67px;font-size:11px;color:#44484c;letter-spacing:0.113px">2022.12.20, 11:21:33</div>
<div class="a" style="left:35px;top:164px;width:1488px;height:1px;background:#ebebeb"></div>
<div class="a" style="left:42.6px;top:141.60000000000002px;width:12.4px;height:12.4px;border:1.7px solid #c2c2c2;background:#fff"></div>
<div class="t" style="left:84.5px;top:143.53px;font-size:11px;color:#2d73b8;letter-spacing:-0.217px">DIM_PHYSICAL_INV_STOCK_TYPE_RV</div>
<div class="t" style="left:355.5px;top:143.53px;font-size:11px;color:#44484c;letter-spacing:-0.211px">DIM_PHYSICAL_INV_STOCK_TYPE_RV</div>
<div class="t" style="left:599.6px;top:143.53px;font-size:11px;color:#44484c;letter-spacing:0.060px">Vue (Jeu de données relationnel)</div>
<div class="t" style="left:821.7px;top:143.53px;font-size:11px;color:#44484c;letter-spacing:-0.345px">HRV_PREPROD</div>
<div class="t" style="left:1090px;top:143.53px;font-size:11px;color:#44484c;letter-spacing:0.076px">Modifications à déployer</div>
<div class="t" style="left:1274px;top:143.53px;font-size:11px;color:#44484c;letter-spacing:0.113px">2022.12.20, 11:21:33</div>
<div class="a" style="left:35px;top:197px;width:1488px;height:1px;background:#ebebeb"></div>
<div class="a" style="left:42.6px;top:174.5px;width:12.4px;height:12.4px;border:1.7px solid #c2c2c2;background:#fff"></div>
<div class="t" style="left:84.5px;top:176.39px;font-size:11px;color:#2d73b8;letter-spacing:-0.213px">DIM_PHYSICAL_INV_STATUS_RV</div>
<div class="t" style="left:355.5px;top:176.39px;font-size:11px;color:#44484c;letter-spacing:-0.207px">DIM_PHYSICAL_INV_STATUS_RV</div>
<div class="t" style="left:599.6px;top:176.39px;font-size:11px;color:#44484c;letter-spacing:0.060px">Vue (Jeu de données relationnel)</div>
<div class="t" style="left:821.7px;top:176.39px;font-size:11px;color:#44484c;letter-spacing:-0.345px">HRV_PREPROD</div>
<div class="t" style="left:1090px;top:176.39px;font-size:11px;color:#44484c;letter-spacing:0.076px">Modifications à déployer</div>
<div class="t" style="left:1274px;top:176.39px;font-size:11px;color:#44484c;letter-spacing:0.113px">2022.12.20, 11:21:33</div>
<div class="a" style="left:35px;top:230px;width:1488px;height:1px;background:#ebebeb"></div>
<div class="a" style="left:42.6px;top:207.39999999999998px;width:12.4px;height:12.4px;border:1.7px solid #c2c2c2;background:#fff"></div>
<div class="t" style="left:84.5px;top:209.25px;font-size:11px;color:#2d73b8;letter-spacing:-0.230px">DIM_INFORECORD_CATEGORY_RV</div>
<div class="t" style="left:355.5px;top:209.25px;font-size:11px;color:#44484c;letter-spacing:-0.224px">DIM_INFORECORD_CATEGORY_RV</div>
<div class="t" style="left:599.6px;top:209.25px;font-size:11px;color:#44484c;letter-spacing:0.060px">Vue (Jeu de données relationnel)</div>
<div class="t" style="left:821.7px;top:209.25px;font-size:11px;color:#44484c;letter-spacing:-0.345px">HRV_PREPROD</div>
<div class="t" style="left:1090px;top:209.25px;font-size:11px;color:#44484c;letter-spacing:0.076px">Modifications à déployer</div>
<div class="t" style="left:1274px;top:209.25px;font-size:11px;color:#44484c;letter-spacing:0.113px">2022.12.20, 11:21:33</div>
<div class="a" style="left:35px;top:263px;width:1488px;height:1px;background:#ebebeb"></div>
<div class="a" style="left:42.6px;top:240.20000000000005px;width:12.4px;height:12.4px;border:1.7px solid #c2c2c2;background:#fff"></div>
<div class="t" style="left:84.5px;top:242.11px;font-size:11px;color:#2d73b8;letter-spacing:-0.227px">DIM_CONSUMPTION_POSTING_RV</div>
<div class="t" style="left:355.5px;top:242.11px;font-size:11px;color:#44484c;letter-spacing:-0.221px">DIM_CONSUMPTION_POSTING_RV</div>
<div class="t" style="left:599.6px;top:242.11px;font-size:11px;color:#44484c;letter-spacing:0.060px">Vue (Jeu de données relationnel)</div>
<div class="t" style="left:821.7px;top:242.11px;font-size:11px;color:#44484c;letter-spacing:-0.345px">HRV_PREPROD</div>
<div class="t" style="left:1090px;top:242.11px;font-size:11px;color:#44484c;letter-spacing:0.076px">Modifications à déployer</div>
<div class="t" style="left:1274px;top:242.11px;font-size:11px;color:#44484c;letter-spacing:0.113px">2022.12.20, 11:21:33</div>
<div class="a" style="left:35px;top:295px;width:1488px;height:1px;background:#ebebeb"></div>
<div class="a" style="left:42.6px;top:273.1px;width:12.4px;height:12.4px;border:1.7px solid #c2c2c2;background:#fff"></div>
<div class="t" style="left:84.5px;top:274.97px;font-size:11px;color:#2d73b8;letter-spacing:-0.224px">DIM_SOLD_TO_RV</div>
<div class="t" style="left:355.5px;top:274.97px;font-size:11px;color:#44484c;letter-spacing:-0.218px">DIM_SOLD_TO_RV</div>
<div class="t" style="left:599.6px;top:274.97px;font-size:11px;color:#44484c;letter-spacing:0.060px">Vue (Jeu de données relationnel)</div>
<div class="t" style="left:821.7px;top:274.97px;font-size:11px;color:#44484c;letter-spacing:-0.345px">HRV_PREPROD</div>
<div class="t" style="left:1090px;top:274.97px;font-size:11px;color:#44484c;letter-spacing:0.076px">Modifications à déployer</div>
<div class="t" style="left:1274px;top:274.97px;font-size:11px;color:#44484c;letter-spacing:0.113px">2022.12.20, 11:21:33</div>
<div class="a" style="left:35px;top:328px;width:1488px;height:1px;background:#ebebeb"></div>
<div class="a" style="left:42.6px;top:305.9px;width:12.4px;height:12.4px;border:1.7px solid #c2c2c2;background:#fff"></div>
<div class="t" style="left:84.5px;top:307.83px;font-size:11px;color:#2d73b8;letter-spacing:-0.214px">DIM_SHIP_TO_RV</div>
<div class="t" style="left:355.5px;top:307.83px;font-size:11px;color:#44484c;letter-spacing:-0.208px">DIM_SHIP_TO_RV</div>
<div class="t" style="left:599.6px;top:307.83px;font-size:11px;color:#44484c;letter-spacing:0.060px">Vue (Jeu de données relationnel)</div>
<div class="t" style="left:821.7px;top:307.83px;font-size:11px;color:#44484c;letter-spacing:-0.345px">HRV_PREPROD</div>
<div class="t" style="left:1090px;top:307.83px;font-size:11px;color:#44484c;letter-spacing:0.076px">Modifications à déployer</div>
<div class="t" style="left:1274px;top:307.83px;font-size:11px;color:#44484c;letter-spacing:0.113px">2022.12.20, 11:21:33</div>
<svg style="left:0;top:0" width="1523" height="316" viewBox="0 410 1523 316"><g transform="translate(68,420.9)" fill="none" stroke="#2d73b8"><path d="M1 0.6h1.8M3.6 0.6h1.8M6.2 0.6h1.8" stroke-width="1"/><path d="M0.6 12.2V2.4h8.4M0.6 5.6h6M0.6 8.8h6M0.6 12.2h6M3.6 2.4v9.8" stroke-width="1.1"/><path d="M7.6 4.6h1.6M10.2 4.6h2" stroke-width="0.9"/><rect x="7" y="6" width="5.8" height="7" stroke-width="1.1"/><path d="M7 8.4h5.8M7 10.8h5.8M9.9 6v7" stroke-width="0.9"/></g><path d="M1020.7 428.50h6.6" stroke="#8ab6de" stroke-width="1"/><path d="M1081.09 421.00A6.3 6.3 0 0 1 1085.92 425.05M1086.16 428.51A6.3 6.3 0 1 1 1078.91 421.00" fill="none" stroke="#3f4448" stroke-width="1"/><path d="M1079.6 424.20v3.5h4.3" fill="none" stroke="#3f4448" stroke-width="1"/><path d="M1486.4 420.60L1488.5 425.30L1492.8 425.30L1489.5 428.50L1490.7 432.60L1486.4 430.30L1482.1 432.60L1483.3 428.50L1480 425.30L1484.3 425.30Z" fill="none" stroke="#33618e" stroke-width="1" stroke-linejoin="round"/><g transform="translate(68,453.76)" fill="none" stroke="#2d73b8"><path d="M1 0.6h1.8M3.6 0.6h1.8M6.2 0.6h1.8" stroke-width="1"/><path d="M0.6 12.2V2.4h8.4M0.6 5.6h6M0.6 8.8h6M0.6 12.2h6M3.6 2.4v9.8" stroke-width="1.1"/><path d="M7.6 4.6h1.6M10.2 4.6h2" stroke-width="0.9"/><rect x="7" y="6" width="5.8" height="7" stroke-width="1.1"/><path d="M7 8.4h5.8M7 10.8h5.8M9.9 6v7" stroke-width="0.9"/></g><path d="M1020.7 461.36h6.6" stroke="#8ab6de" stroke-width="1"/><path d="M1081.09 453.86A6.3 6.3 0 0 1 1085.92 457.91M1086.16 461.37A6.3 6.3 0 1 1 1078.91 453.86" fill="none" stroke="#3f4448" stroke-width="1"/><path d="M1079.6 457.06v3.5h4.3" fill="none" stroke="#3f4448" stroke-width="1"/><path d="M1486.4 453.46L1488.5 458.16L1492.8 458.16L1489.5 461.36L1490.7 465.46L1486.4 463.16L1482.1 465.46L1483.3 461.36L1480 458.16L1484.3 458.16Z" fill="none" stroke="#33618e" stroke-width="1" stroke-linejoin="round"/><g transform="translate(68,486.62)" fill="none" stroke="#2d73b8"><path d="M1 0.6h1.8M3.6 0.6h1.8M6.2 0.6h1.8" stroke-width="1"/><path d="M0.6 12.2V2.4h8.4M0.6 5.6h6M0.6 8.8h6M0.6 12.2h6M3.6 2.4v9.8" stroke-width="1.1"/><path d="M7.6 4.6h1.6M10.2 4.6h2" stroke-width="0.9"/><rect x="7" y="6" width="5.8" height="7" stroke-width="1.1"/><path d="M7 8.4h5.8M7 10.8h5.8M9.9 6v7" stroke-width="0.9"/></g><path d="M1020.7 494.22h6.6" stroke="#8ab6de" stroke-width="1"/><path d="M1081.09 486.72A6.3 6.3 0 0 1 1085.92 490.77M1086.16 494.23A6.3 6.3 0 1 1 1078.91 486.72" fill="none" stroke="#3f4448" stroke-width="1"/><path d="M1079.6 489.92v3.5h4.3" fill="none" stroke="#3f4448" stroke-width="1"/><path d="M1486.4 486.32L1488.5 491.02L1492.8 491.02L1489.5 494.22L1490.7 498.32L1486.4 496.02L1482.1 498.32L1483.3 494.22L1480 491.02L1484.3 491.02Z" fill="none" stroke="#33618e" stroke-width="1" stroke-linejoin="round"/><g transform="translate(68,519.48)" fill="none" stroke="#2d73b8"><path d="M1 0.6h1.8M3.6 0.6h1.8M6.2 0.6h1.8" stroke-width="1"/><path d="M0.6 12.2V2.4h8.4M0.6 5.6h6M0.6 8.8h6M0.6 12.2h6M3.6 2.4v9.8" stroke-width="1.1"/><path d="M7.6 4.6h1.6M10.2 4.6h2" stroke-width="0.9"/><rect x="7" y="6" width="5.8" height="7" stroke-width="1.1"/><path d="M7 8.4h5.8M7 10.8h5.8M9.9 6v7" stroke-width="0.9"/></g><path d="M1020.7 527.08h6.6" stroke="#8ab6de" stroke-width="1"/><path d="M1081.09 519.58A6.3 6.3 0 0 1 1085.92 523.63M1086.16 527.09A6.3 6.3 0 1 1 1078.91 519.58" fill="none" stroke="#3f4448" stroke-width="1"/><path d="M1079.6 522.78v3.5h4.3" fill="none" stroke="#3f4448" stroke-width="1"/><path d="M1486.4 519.18L1488.5 523.88L1492.8 523.88L1489.5 527.08L1490.7 531.18L1486.4 528.88L1482.1 531.18L1483.3 527.08L1480 523.88L1484.3 523.88Z" fill="none" stroke="#33618e" stroke-width="1" stroke-linejoin="round"/><g transform="translate(68,552.3399999999999)" fill="none" stroke="#2d73b8"><path d="M1 0.6h1.8M3.6 0.6h1.8M6.2 0.6h1.8" stroke-width="1"/><path d="M0.6 12.2V2.4h8.4M0.6 5.6h6M0.6 8.8h6M0.6 12.2h6M3.6 2.4v9.8" stroke-width="1.1"/><path d="M7.6 4.6h1.6M10.2 4.6h2" stroke-width="0.9"/><rect x="7" y="6" width="5.8" height="7" stroke-width="1.1"/><path d="M7 8.4h5.8M7 10.8h5.8M9.9 6v7" stroke-width="0.9"/></g><path d="M1020.7 559.94h6.6" stroke="#8ab6de" stroke-width="1"/><path d="M1081.09 552.44A6.3 6.3 0 0 1 1085.92 556.49M1086.16 559.95A6.3 6.3 0 1 1 1078.91 552.44" fill="none" stroke="#3f4448" stroke-width="1"/><path d="M1079.6 555.64v3.5h4.3" fill="none" stroke="#3f4448" stroke-width="1"/><path d="M1486.4 552.04L1488.5 556.74L1492.8 556.74L1489.5 559.94L1490.7 564.04L1486.4 561.74L1482.1 564.04L1483.3 559.94L1480 556.74L1484.3 556.74Z" fill="none" stroke="#33618e" stroke-width="1" stroke-linejoin="round"/><g transform="translate(68,585.2)" fill="none" stroke="#2d73b8"><path d="M1 0.6h1.8M3.6 0.6h1.8M6.2 0.6h1.8" stroke-width="1"/><path d="M0.6 12.2V2.4h8.4M0.6 5.6h6M0.6 8.8h6M0.6 12.2h6M3.6 2.4v9.8" stroke-width="1.1"/><path d="M7.6 4.6h1.6M10.2 4.6h2" stroke-width="0.9"/><rect x="7" y="6" width="5.8" height="7" stroke-width="1.1"/><path d="M7 8.4h5.8M7 10.8h5.8M9.9 6v7" stroke-width="0.9"/></g><path d="M1020.7 592.80h6.6" stroke="#8ab6de" stroke-width="1"/><path d="M1081.09 585.30A6.3 6.3 0 0 1 1085.92 589.35M1086.16 592.81A6.3 6.3 0 1 1 1078.91 585.30" fill="none" stroke="#3f4448" stroke-width="1"/><path d="M1079.6 588.50v3.5h4.3" fill="none" stroke="#3f4448" stroke-width="1"/><path d="M1486.4 584.90L1488.5 589.60L1492.8 589.60L1489.5 592.80L1490.7 596.90L1486.4 594.60L1482.1 596.90L1483.3 592.80L1480 589.60L1484.3 589.60Z" fill="none" stroke="#33618e" stroke-width="1" stroke-linejoin="round"/><g transform="translate(68,618.06)" fill="none" stroke="#2d73b8"><path d="M1 0.6h1.8M3.6 0.6h1.8M6.2 0.6h1.8" stroke-width="1"/><path d="M0.6 12.2V2.4h8.4M0.6 5.6h6M0.6 8.8h6M0.6 12.2h6M3.6 2.4v9.8" stroke-width="1.1"/><path d="M7.6 4.6h1.6M10.2 4.6h2" stroke-width="0.9"/><rect x="7" y="6" width="5.8" height="7" stroke-width="1.1"/><path d="M7 8.4h5.8M7 10.8h5.8M9.9 6v7" stroke-width="0.9"/></g><path d="M1020.7 625.66h6.6" stroke="#8ab6de" stroke-width="1"/><path d="M1081.09 618.16A6.3 6.3 0 0 1 1085.92 622.21M1086.16 625.67A6.3 6.3 0 1 1 1078.91 618.16" fill="none" stroke="#3f4448" stroke-width="1"/><path d="M1079.6 621.36v3.5h4.3" fill="none" stroke="#3f4448" stroke-width="1"/><path d="M1486.4 617.76L1488.5 622.46L1492.8 622.46L1489.5 625.66L1490.7 629.76L1486.4 627.46L1482.1 629.76L1483.3 625.66L1480 622.46L1484.3 622.46Z" fill="none" stroke="#33618e" stroke-width="1" stroke-linejoin="round"/><g transform="translate(68,650.92)" fill="none" stroke="#2d73b8"><path d="M1 0.6h1.8M3.6 0.6h1.8M6.2 0.6h1.8" stroke-width="1"/><path d="M0.6 12.2V2.4h8.4M0.6 5.6h6M0.6 8.8h6M0.6 12.2h6M3.6 2.4v9.8" stroke-width="1.1"/><path d="M7.6 4.6h1.6M10.2 4.6h2" stroke-width="0.9"/><rect x="7" y="6" width="5.8" height="7" stroke-width="1.1"/><path d="M7 8.4h5.8M7 10.8h5.8M9.9 6v7" stroke-width="0.9"/></g><path d="M1020.7 658.52h6.6" stroke="#8ab6de" stroke-width="1"/><path d="M1081.09 651.02A6.3 6.3 0 0 1 1085.92 655.07M1086.16 658.53A6.3 6.3 0 1 1 1078.91 651.02" fill="none" stroke="#3f4448" stroke-width="1"/><path d="M1079.6 654.22v3.5h4.3" fill="none" stroke="#3f4448" stroke-width="1"/><path d="M1486.4 650.62L1488.5 655.32L1492.8 655.32L1489.5 658.52L1490.7 662.62L1486.4 660.32L1482.1 662.62L1483.3 658.52L1480 655.32L1484.3 655.32Z" fill="none" stroke="#33618e" stroke-width="1" stroke-linejoin="round"/><g transform="translate(68,683.78)" fill="none" stroke="#2d73b8"><path d="M1 0.6h1.8M3.6 0.6h1.8M6.2 0.6h1.8" stroke-width="1"/><path d="M0.6 12.2V2.4h8.4M0.6 5.6h6M0.6 8.8h6M0.6 12.2h6M3.6 2.4v9.8" stroke-width="1.1"/><path d="M7.6 4.6h1.6M10.2 4.6h2" stroke-width="0.9"/><rect x="7" y="6" width="5.8" height="7" stroke-width="1.1"/><path d="M7 8.4h5.8M7 10.8h5.8M9.9 6v7" stroke-width="0.9"/></g><path d="M1020.7 691.38h6.6" stroke="#8ab6de" stroke-width="1"/><path d="M1081.09 683.88A6.3 6.3 0 0 1 1085.92 687.93M1086.16 691.39A6.3 6.3 0 1 1 1078.91 683.88" fill="none" stroke="#3f4448" stroke-width="1"/><path d="M1079.6 687.08v3.5h4.3" fill="none" stroke="#3f4448" stroke-width="1"/><path d="M1486.4 683.48L1488.5 688.18L1492.8 688.18L1489.5 691.38L1490.7 695.48L1486.4 693.18L1482.1 695.48L1483.3 691.38L1480 688.18L1484.3 688.18Z" fill="none" stroke="#33618e" stroke-width="1" stroke-linejoin="round"/><g transform="translate(68,716.64)" fill="none" stroke="#2d73b8"><path d="M1 0.6h1.8M3.6 0.6h1.8M6.2 0.6h1.8" stroke-width="1"/><path d="M0.6 12.2V2.4h8.4M0.6 5.6h6M0.6 8.8h6M0.6 12.2h6M3.6 2.4v9.8" stroke-width="1.1"/><path d="M7.6 4.6h1.6M10.2 4.6h2" stroke-width="0.9"/><rect x="7" y="6" width="5.8" height="7" stroke-width="1.1"/><path d="M7 8.4h5.8M7 10.8h5.8M9.9 6v7" stroke-width="0.9"/></g><path d="M1020.7 724.24h6.6" stroke="#8ab6de" stroke-width="1"/><path d="M1081.09 716.74A6.3 6.3 0 0 1 1085.92 720.79M1086.16 724.25A6.3 6.3 0 1 1 1078.91 716.74" fill="none" stroke="#3f4448" stroke-width="1"/><path d="M1079.6 719.94v3.5h4.3" fill="none" stroke="#3f4448" stroke-width="1"/><path d="M1486.4 716.34L1488.5 721.04L1492.8 721.04L1489.5 724.24L1490.7 728.34L1486.4 726.04L1482.1 728.34L1483.3 724.24L1480 721.04L1484.3 721.04Z" fill="none" stroke="#33618e" stroke-width="1" stroke-linejoin="round"/></svg>
<div class="a" style="left:36px;top:1px;width:1487px;height:1px;background:repeating-linear-gradient(90deg,#4a4a4a 0,#4a4a4a 1px,#d0d0d0 1px,#d0d0d0 2px)"></div>
<div class="a" style="left:36px;top:31px;width:1487px;height:1px;background:repeating-linear-gradient(90deg,#4a4a4a 0,#4a4a4a 1px,#d0d0d0 1px,#d0d0d0 2px)"></div>
</div>
<div class="a" style="left:1523px;top:383px;width:13px;height:343px;background:#fff"></div>
<div class="a" style="left:1523px;top:383px;width:1px;height:27px;background:#e5e5e5"></div>
<svg style="left:1523px;top:383px" width="13" height="343" viewBox="0 0 13 343"><polygon points="4.8,9 10.8,9 7.8,5.4" fill="#a0a0a0"/><rect x="2.6" y="14" width="10.4" height="104" fill="#b3b3b3"/><polygon points="4.6,334 10.6,334 7.6,337.6" fill="#a0a0a0"/></svg>
<div class="a" style="left:35px;top:726px;width:1501px;height:14px;background:#fff"></div>
<svg style="left:35px;top:726px" width="1501" height="14" viewBox="0 0 1501 14"><polygon points="9,4.2 9,10.2 5.8,7.2" fill="#a0a0a0"/><rect x="14.5" y="2" width="1460" height="9.8" fill="#b3b3b3"/><polygon points="1481,4 1481,10 1484.4,7" fill="#a0a0a0"/></svg>
<div class="a" style="left:34px;top:37px;width:1px;height:701px;background:#8796a5"></div>
<div class="a" style="left:35px;top:37px;width:1px;height:701px;background:#eef1f4"></div>
</body></html>
